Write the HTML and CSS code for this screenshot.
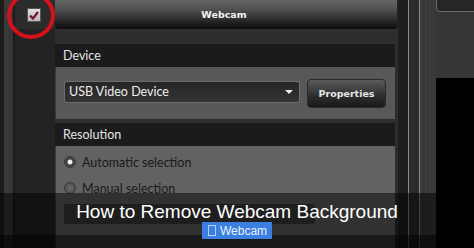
FILE: index.html
```html
<!DOCTYPE html>
<html lang="en">
    <head>
        <title>How to Remove Webcam Background</title>
        <meta charset="utf-8">
        <meta name="viewport" content="width=device-width, initial-scale=1">
        <link rel="stylesheet" href="styles.css">
    </head>
    <body>
        <div class="app">
            <div class="rail-left"></div>
            <div class="main">
                <div class="check-cell">
                    <span class="checkbox">
                        <svg width="10" height="9" viewBox="0 0 10 9"><path d="M1 4.5 L4 7.5 L9 1" fill="none" stroke="#7a1224" stroke-width="2.2"/></svg>
                    </span>
                </div>
                <div class="topbar">Webcam</div>
                <div></div>
                <div class="panels">
                    <section class="group">
                        <div class="group-head">Device</div>
                        <div class="group-body device-row">
                            <div class="select">USB Video Device <span class="caret"></span></div>
                            <button class="btn">Properties</button>
                        </div>
                    </section>
                    <section class="group">
                        <div class="group-head">Resolution</div>
                        <div class="group-body res">
                            <div class="radio on"><span class="dot"></span>Automatic selection</div>
                            <div class="radio"><span class="dot"></span>Manual selection</div>
                            <div class="field"></div>
                        </div>
                    </section>
                </div>
            </div>
            <div class="rail-right">
                <div class="line"></div>
                <div class="strip"></div>
                <div class="line"></div>
                <div class="strip wide"></div>
                <div class="preview">
                    <div class="preview-frame"></div>
                    <div class="preview-gap"></div>
                    <div class="preview-black"></div>
                </div>
            </div>
        </div>
        <div class="ring"></div>
        <div class="caption">
            <h1>How to Remove Webcam Background</h1>
            <span class="tag"><span class="tofu"></span>Webcam</span>
        </div>
    </body>
</html>
```

FILE: styles.css
```css
html, body {
  margin: 0;
  width: 474px;
  height: 248px;
  overflow: hidden;
}

body {
  position: relative;
  background: #222;
  font-family: Lato, "Noto Sans", sans-serif;
}

.app {
  display: flex;
  height: 248px;
  overflow: hidden;
}

.rail-left {
  width: 15px;
  background: linear-gradient(to right, #1c1c1c 0, #1c1c1c 4px, #3a3a3a 4px, #353535 13px, #1a1a1a 13px);
}

.main {
  width: 383px;
  display: grid;
  grid-template-columns: 40px 1fr;
  grid-template-rows: 29px 219px;
  background: #232323;
}

.check-cell {
  background: #2c2c2c;
  display: flex;
  padding: 8px 0 0 12px;
}

.checkbox {
  width: 14px;
  height: 14px;
  background: linear-gradient(#e2e2e2, #b8b8b8);
  border: 1px solid #555;
  box-sizing: border-box;
  display: flex;
  align-items: center;
  justify-content: center;
}

.topbar {
  background: linear-gradient(#666 0, #4a4a4a 40%, #1e1e1e 80%, #0c0c0c 100%);
  border-radius: 0 0 4px 4px;
  color: #f2f2f2;
  font-family: "DejaVu Sans", sans-serif;
  font-weight: bold;
  font-size: 9.5px;
  text-align: center;
  line-height: 29px;
  margin-right: 1px;
  padding-right: 4px;
}

.panels {
  padding-top: 15px;
  padding-right: 3px;
  background: #2d2d2d;
  overflow: hidden;
}

.group-head {
  background: #1b1b1b;
  color: #e4e4e4;
  font-size: 12.5px;
  height: 23px;
  line-height: 23px;
  padding-left: 8px;
}

.group-body {
  background: #585858;
  border-left: 1px solid #3a3a3a;
}

.device-row {
  height: 52px;
  display: flex;
  align-items: center;
  padding: 0 9px 0 8px;
  gap: 7px;
  margin-bottom: 4px;
}

.select {
  flex: 1;
  height: 22px;
  box-sizing: border-box;
  border: 1px solid #6e6e6e;
  border-radius: 3px;
  background: linear-gradient(#262626, #333);
  color: #eee;
  font-size: 12.5px;
  line-height: 20px;
  padding-left: 4px;
  display: flex;
  justify-content: space-between;
  margin-top: -2px;
}

.caret {
  width: 0;
  height: 0;
  border-left: 4px solid transparent;
  border-right: 4px solid transparent;
  border-top: 4px solid #eee;
  margin: 8px 6px 0 0;
}

.btn {
  width: 79px;
  height: 29px;
  border: 1px solid #2a2a2a;
  border-radius: 4px;
  background: linear-gradient(#5c5c5c, #303030 55%, #181818);
  color: #e6e6e6;
  font-family: "DejaVu Sans", sans-serif;
  font-weight: bold;
  font-size: 9.5px;
  padding: 0;
}

.res {
  background: #626262;
  height: 102px;
  box-sizing: border-box;
  padding: 6px 0 0 8px;
}

.radio {
  display: flex;
  align-items: center;
  gap: 6px;
  color: #1a1a1a;
  font-size: 12.5px;
  height: 20px;
  margin-bottom: 6px;
}

.dot {
  width: 12px;
  height: 12px;
  border-radius: 50%;
  box-sizing: border-box;
  background: radial-gradient(#6c6c6c, #444);
  border: 1px solid #3a3a3a;
}

.radio.on .dot {
  background: radial-gradient(circle, #fff 0, #eee 2px, #3a3a3a 3px, #555 6px);
}

.field {
  height: 20px;
  margin: 4px 80px 0 0;
  background: #3c3c3c;
  border-radius: 2px;
}

.rail-right {
  flex: 1;
  display: flex;
  background: #1e1e1e;
  padding-left: 10px;
}

.line {
  width: 1px;
  background: #8a8a8a;
}

.strip {
  width: 10px;
  background: #2b2b2b;
}

.strip.wide {
  width: 16px;
  background: repeating-linear-gradient(to right, #383838 0, #3e3e3e 2px, #343434 4px);
}

.preview {
  flex: 1;
  display: flex;
  flex-direction: column;
  background: #363636;
}

.preview-frame {
  height: 11px;
  border: 1px solid #6a6a6a;
  border-top: 0;
  border-right: 0;
  border-radius: 0 0 0 4px;
  background: #262626;
}

.preview-gap {
  height: 66px;
}

.preview-black {
  flex: 1;
  background: #000;
}

.ring {
  position: absolute;
  left: 7px;
  top: -8px;
  width: 48px;
  height: 47px;
  box-sizing: border-box;
  border: 4px solid #d4121a;
  border-radius: 50%;
}

.caption {
  position: absolute;
  left: 0;
  right: 0;
  top: 193px;
  bottom: 0;
  padding-top: 7px;
  text-align: center;
  background: linear-gradient(rgba(0, 0, 0, 0.5) 0, rgba(0, 0, 0, 0.5) 42px, rgba(0, 0, 0, 0.75) 42px);
}

.caption h1 {
  margin: 0;
  color: #fff;
  font-family: "Liberation Sans", Arial, sans-serif;
  font-weight: normal;
  font-size: 19px;
  line-height: 24px;
}

.tag {
  display: inline-flex;
  align-items: center;
  gap: 4px;
  margin-top: -2px;
  height: 17px;
  padding: 0 5px 0 6px;
  background: #3b7fe0;
  color: #e8efff;
  font-family: "Liberation Sans", Arial, sans-serif;
  font-size: 12px;
  vertical-align: top;
}

.tofu {
  width: 6px;
  height: 9px;
  border: 1px solid #b9cff5;
}
```
